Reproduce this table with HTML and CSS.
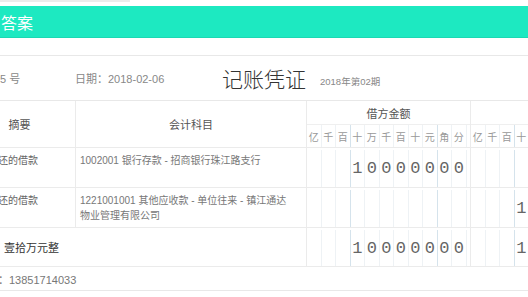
FILE: index.html
```html
<!DOCTYPE html>
<html lang="zh-CN">
<head>
<meta charset="utf-8">
<title>记账凭证</title>
<link rel="stylesheet" href="styles.css">
</head>
<body>
<div class="topstrip"><div class="topstrip-line"></div></div>
<div class="bar"><span class="bar-title">答案</span></div>
<div class="info">
  <span class="no">5 号</span>
  <span class="date">日期：2018-02-06</span>
  <span class="title">记账凭证</span>
  <span class="period">2018年第02期</span>
</div>
<div class="table">
  <div class="cell h-cell">摘要</div>
  <div class="cell h-cell">会计科目</div>
  <div class="cell h-amount">
    <div class="h-amount-title">借方金额</div>
    <div class="units">
      <span class="d">亿</span><span class="d">千</span><span class="d sep">百</span><span class="d">十</span><span class="d">万</span><span class="d">千</span><span class="d">百</span><span class="d">十</span><span class="d sep">元</span><span class="d">角</span><span class="d">分</span>
    </div>
  </div>
  <div class="cell h-amount">
    <div class="h-amount-title">贷方金额</div>
    <div class="units">
      <span class="d">亿</span><span class="d">千</span><span class="d sep">百</span><span class="d">十</span><span class="d">万</span><span class="d">千</span><span class="d">百</span><span class="d">十</span><span class="d sep">元</span><span class="d">角</span><span class="d">分</span>
    </div>
  </div>

  <div class="cell c-summary">还的借款</div>
  <div class="cell c-account">1002001 银行存款 - 招商银行珠江路支行</div>
  <div class="cell c-amount">
    <span class="d"></span><span class="d"></span><span class="d sep"></span><span class="d">1</span><span class="d">0</span><span class="d">0</span><span class="d">0</span><span class="d">0</span><span class="d sep">0</span><span class="d">0</span><span class="d">0</span>
  </div>
  <div class="cell c-amount">
    <span class="d"></span><span class="d"></span><span class="d sep"></span><span class="d"></span><span class="d"></span><span class="d"></span><span class="d"></span><span class="d"></span><span class="d sep"></span><span class="d"></span><span class="d"></span>
  </div>

  <div class="cell c-summary">还的借款</div>
  <div class="cell c-account">1221001001 其他应收款 - 单位往来 - 镇江通达物业管理有限公司</div>
  <div class="cell c-amount">
    <span class="d"></span><span class="d"></span><span class="d sep"></span><span class="d"></span><span class="d"></span><span class="d"></span><span class="d"></span><span class="d"></span><span class="d sep"></span><span class="d"></span><span class="d"></span>
  </div>
  <div class="cell c-amount">
    <span class="d"></span><span class="d"></span><span class="d sep"></span><span class="d">1</span><span class="d">0</span><span class="d">0</span><span class="d">0</span><span class="d">0</span><span class="d sep">0</span><span class="d">0</span><span class="d">0</span>
  </div>

  <div class="cell c-total">壹拾万元整</div>
  <div class="cell c-amount">
    <span class="d"></span><span class="d"></span><span class="d sep"></span><span class="d">1</span><span class="d">0</span><span class="d">0</span><span class="d">0</span><span class="d">0</span><span class="d sep">0</span><span class="d">0</span><span class="d">0</span>
  </div>
  <div class="cell c-amount">
    <span class="d"></span><span class="d"></span><span class="d sep"></span><span class="d">1</span><span class="d">0</span><span class="d">0</span><span class="d">0</span><span class="d">0</span><span class="d sep">0</span><span class="d">0</span><span class="d">0</span>
  </div>
</div>
<div class="footer"><span class="footer-text">：13851714033</span></div>
</body>
</html>
```

FILE: styles.css
```css
* { box-sizing: border-box; }
html, body { margin: 0; padding: 0; overflow: hidden; background: #fff; }
body {
  width: 528px;
  height: 297px;
  font-family: "Liberation Sans", "Noto Sans CJK SC", sans-serif;
  color: #666;
}
.topstrip { height: 6px; }
.topstrip-line { width: 130px; height: 2px; background: #ececec; }
.bar {
  height: 32px;
  background: #1de9c1;
  border-bottom: 1px solid #1bd8b3;
  display: flex;
  align-items: center;
}
.bar-title {
  color: #fff;
  font-size: 16px;
  line-height: 1;
  margin-left: 1px;
  font-family: "Noto Sans CJK SC", sans-serif;
}
.info {
  margin-top: 17px;
  height: 45px;
  border-top: 1px solid #e8e8e8;
  display: flex;
  align-items: center;
}
.no { width: 75px; font-size: 11px; color: #888; }
.date { width: 147px; font-size: 11px; color: #888; }
.title {
  width: 98px;
  font-size: 21px;
  color: #333;
  line-height: 1;
  font-family: "Noto Sans CJK SC", sans-serif;
  font-weight: 300;
}
.period { font-size: 9.5px; color: #888; margin-top: 6px; }

.table {
  margin-left: -36px;
  width: 671px;
  display: grid;
  grid-template-columns: 112px 231px 164px 164px;
  grid-template-rows: 47px 40px 40px 39px;
  border-top: 1px solid #e8e8e8;
}
.cell {
  border-right: 1px solid #ebebeb;
  border-bottom: 1px solid #ebebeb;
}
.h-cell {
  display: flex;
  align-items: center;
  justify-content: center;
  font-size: 11px;
  color: #555;
}
.h-amount { display: flex; flex-direction: column; }
.h-amount-title {
  height: 24px;
  display: flex;
  align-items: center;
  justify-content: center;
  font-size: 11px;
  color: #555;
  border-bottom: 1px solid #efefef;
}
.units { flex: 1; display: flex; font-size: 10px; color: #999; }
.d {
  width: 14.5px;
  flex: none;
  height: 100%;
  display: flex;
  align-items: center;
  justify-content: center;
  border-right: 1px solid #eef2f5;
}
.d.sep { border-right-color: #d5e3ec; }

.c-summary {
  padding: 5px 0 0 34px;
  font-size: 10px;
  line-height: 15px;
  color: #666;
}
.c-account {
  padding: 5px 14px 0 4px;
  font-size: 10px;
  line-height: 15px;
  color: #777;
}
.c-amount {
  display: flex;
  font-family: "Liberation Mono", monospace;
  font-size: 17px;
  color: #666;
  padding-top: 2px;
}
.c-total {
  grid-column: span 2;
  display: flex;
  align-items: center;
  padding-left: 40px;
  font-size: 11px;
  color: #333;
}
.footer {
  height: 24px;
  border-bottom: 1px solid #e8e8e8;
  display: flex;
  align-items: center;
  font-size: 11px;
  color: #777;
}
.footer-text { margin-left: -2px; }
```
